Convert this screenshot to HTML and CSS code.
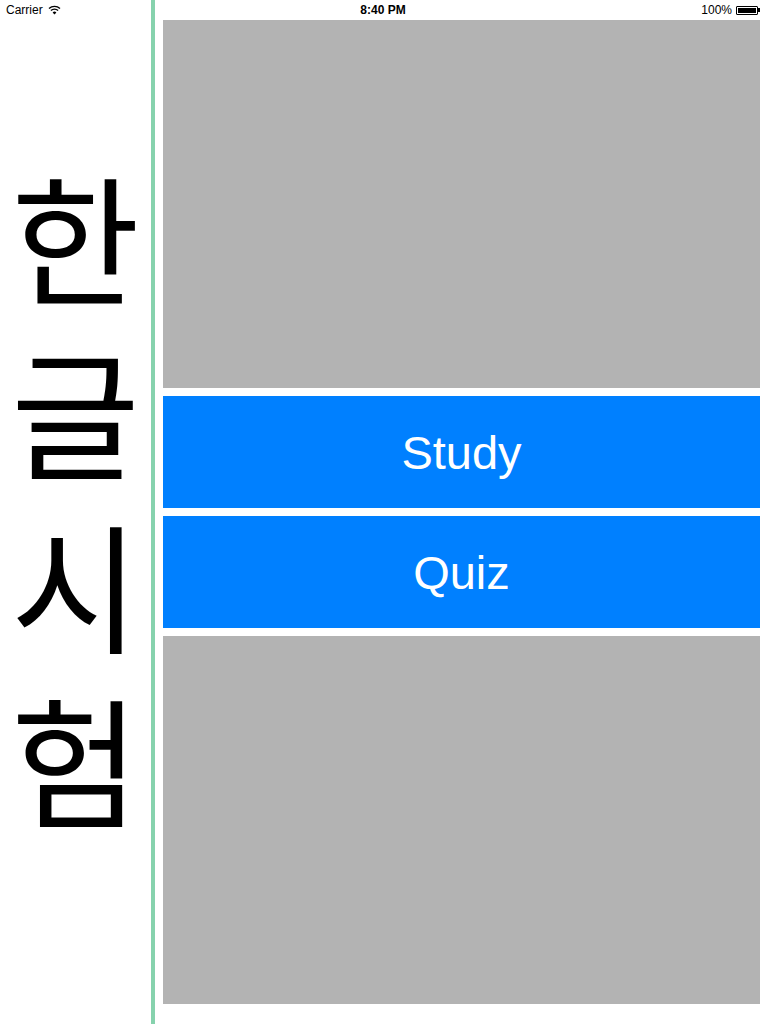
FILE: index.html
```html
<!DOCTYPE html>
<html lang="ko">
<head>
<meta charset="utf-8">
<title>한글시험</title>
<link rel="stylesheet" href="styles.css">
</head>
<body>
<div class="screen">
  <div class="statusbar">
    <div class="sb-left">
      <span>Carrier</span>
      <svg class="wifi" width="13" height="10" viewBox="0 0 13 10">
        <path d="M6.5 9.5 L4.6 7.4 A2.8 2.8 0 0 1 8.4 7.4 Z" fill="#000"/>
        <path d="M2.9 5.6 A5.3 5.3 0 0 1 10.1 5.6" fill="none" stroke="#000" stroke-width="1.4"/>
        <path d="M1 3.6 A8 8 0 0 1 12 3.6" fill="none" stroke="#000" stroke-width="1.4"/>
      </svg>
    </div>
    <div class="sb-center">8:40 PM</div>
    <div class="sb-right">
      <span>100%</span>
      <span class="battery"><span class="battery-fill"></span></span><span class="battery-tip"></span>
    </div>
  </div>
  <aside class="title-col">
    <div class="title">한글시험</div>
  </aside>
  <div class="divider"></div>
  <main class="panel">
    <div class="box"></div>
    <button class="btn">Study</button>
    <button class="btn">Quiz</button>
    <div class="box"></div>
  </main>
</div>
</body>
</html>
```
FILE: styles.css
```css
html, body {
  margin: 0;
  padding: 0;
  background: #fff;
}
.screen {
  position: relative;
  width: 768px;
  height: 1024px;
  display: flex;
  flex-direction: row;
  overflow: hidden;
  font-family: "Liberation Sans", Arial, sans-serif;
}
.statusbar {
  position: absolute;
  top: 0;
  left: 0;
  right: 0;
  height: 20px;
  display: flex;
  align-items: center;
  justify-content: space-between;
  padding: 0 8px 0 6px;
  font-size: 12px;
  color: #000;
  box-sizing: border-box;
}
.sb-left {
  display: flex;
  align-items: center;
  gap: 5px;
  width: 120px;
}
.wifi { margin-top: -1px; }
.sb-center {
  font-weight: bold;
  font-size: 12px;
}
.sb-right {
  display: flex;
  align-items: center;
  justify-content: flex-end;
  width: 120px;
  gap: 0;
}
.sb-right span:first-child { margin-right: 4px; }
.battery {
  display: inline-block;
  width: 22px;
  height: 9px;
  border: 1px solid #000;
  box-sizing: border-box;
  padding: 1px;
  border-radius: 1px;
}
.battery-fill {
  display: block;
  width: 100%;
  height: 100%;
  background: #000;
}
.battery-tip {
  display: inline-block;
  width: 2px;
  height: 4px;
  background: #000;
}
.title-col {
  width: 151px;
  flex: none;
  display: flex;
  align-items: center;
  justify-content: center;
}
.title {
  font-family: "Noto Sans CJK KR", sans-serif;
  writing-mode: vertical-rl;
  text-orientation: upright;
  font-size: 140px;
  line-height: 148px;
  letter-spacing: 34px;
  padding-bottom: 0;
  font-weight: 400;
  color: #000;
  margin-top: 16px;
}
.divider {
  width: 4px;
  flex: none;
  background: #86d2ad;
}
.panel {
  flex: 1;
  display: flex;
  flex-direction: column;
  gap: 8px;
  padding: 20px 8px 20px 8px;
}
.box {
  height: 368px;
  background: #b3b3b3;
  flex: none;
}
.btn {
  height: 112px;
  flex: none;
  border: none;
  margin: 0;
  padding: 0;
  background: #0080ff;
  color: #fff;
  font-family: "Liberation Sans", Arial, sans-serif;
  font-size: 47px;
  text-align: center;
}
```
